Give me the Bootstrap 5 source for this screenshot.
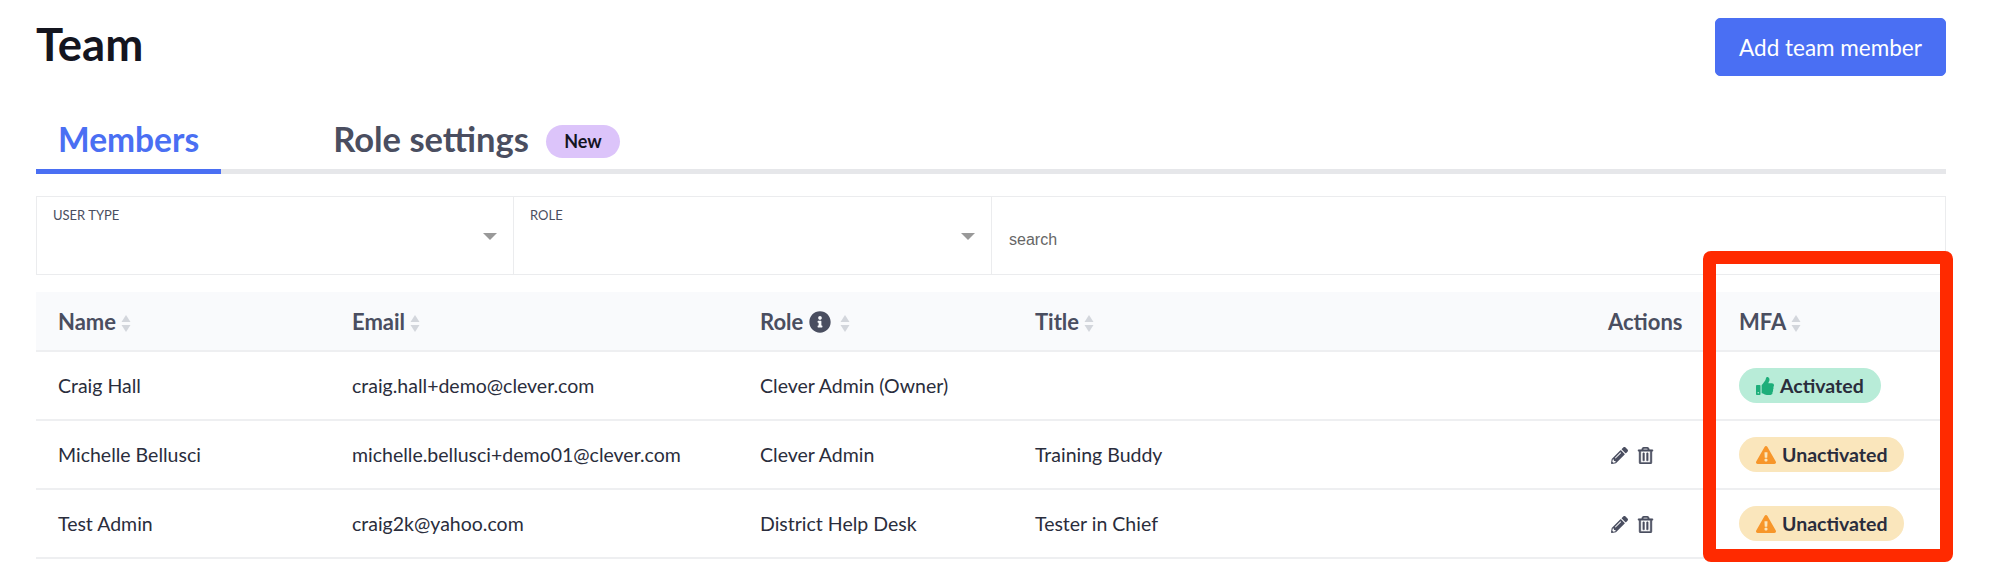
<!DOCTYPE html>
<html lang="en">

<head>
    <meta charset="UTF-8" />
    <meta name="viewport" content="width=device-width, initial-scale=1" />
    <title>Team</title>
    <link href="https://cdn.jsdelivr.net/npm/bootstrap@5.3.2/dist/css/bootstrap.min.css" rel="stylesheet" />
    <style>
        body { font-family: Lato, "Noto Sans", sans-serif; color: #2a2d3c; background: #fff; overflow: hidden; }
        .page-wrap { padding: 18px 53px 0 36px; height: 564px; }
        .page-title { font-size: 45.5px; font-weight: 700; line-height: 52px; margin: 0; color: #14151f; }
        .btn-add { background: #4a6ff3; border-color: #4a6ff3; color: #fff; font-size: 22.5px; width: 231px; height: 58px; border-radius: 5px; padding: 2px 0 0; }
        .team-tabs { border-bottom: 5px solid #e6e7ea; margin-top: 35px; height: 63px; }
        .team-tabs .nav-link { padding: 5px 22px 0; height: 63px; font-size: 33.5px; line-height: 46px; font-weight: 700; color: #4a4e60; border-bottom: 5px solid transparent; display: flex; align-items: flex-start; }
        .team-tabs .nav-link.active { color: #4a6ff3; border-bottom-color: #4a6ff3; }
        .team-tabs .tab-second { margin-left: 112px; padding-left: 0; font-size: 34.5px; }
        .new-pill { background: #dcc4fa; color: #14151f; font-size: 18px; line-height: 33px; font-weight: 700; border-radius: 17px; width: 74px; height: 33px; text-align: center; margin-left: 17px; margin-top: 9px; }
        .filter-row { display: flex; margin-top: 22px; height: 79px; border: 1px solid #ebecee; }
        .filter-cell { position: relative; border-right: 1px solid #ebecee; padding: 10px 16px; }
        .filter-user { width: 477px; }
        .filter-role { width: 478px; }
        .filter-label { font-size: 13px; line-height: 16px; color: #4a4e60; }
        .filter-caret { position: absolute; right: 16px; top: 36px; width: 0; height: 0; border-left: 7px solid transparent; border-right: 7px solid transparent; border-top: 7px solid #999; }
        .filter-search { flex: 1; border: 0; outline: 0; padding: 9px 17px 0; font-family: "Liberation Sans", Arial, sans-serif; font-size: 16px; color: #555; }
        .filter-search::placeholder { color: #666; opacity: 1; }
        .team-table { table-layout: fixed; width: 1910px; margin: 17px 0 0; }
        .team-table th, .team-table td { padding: 0 23px; vertical-align: middle; border-bottom: 2px solid #eeeff1; }
        .team-table th:first-child, .team-table td:first-child { padding-left: 22px; }
        .team-table thead th { background: #f9fafc; height: 59px; font-size: 22px; font-weight: 700; color: #4a4e60; white-space: nowrap; }
        .team-table tbody td { height: 69px; font-size: 19.5px; color: #2a2d3c; white-space: nowrap; }
        .sort-mark { display: inline-block; width: 10px; height: 17px; vertical-align: -2px; margin-left: 5px; }
        .info-mark { width: 22px; height: 22px; fill: #4a4e60; vertical-align: -3px; margin-right: 4px; }
        .act-icon { width: 17px; height: 17px; fill: #4a4e60; margin-right: 9px; vertical-align: -2px; }
        .act-icon:first-child { margin-left: 3px; }
        .mfa-pill { display: inline-flex; align-items: center; height: 35px; border-radius: 18px; padding: 0 17px; font-size: 19.5px; font-weight: 700; color: #2a2d3c; }
        .mfa-on { background: #b8ecd8; }
        .mfa-off { background: #fae6bc; }
        .mfa-pill svg { height: 18px; width: 18px; margin-right: 6px; }
        .mfa-on svg { fill: #1dae7a; }
        .mfa-off svg { fill: #f7962a; width: 20px; }
        .red-callout { position: absolute; left: 1703px; top: 251px; width: 250px; height: 311px; border: 13px solid #ff2a00; border-radius: 8px; pointer-events: none; }
    </style>
</head>

<body>
    <svg width="0" height="0" class="d-none">
        <symbol id="i-thumb" viewBox="0 0 512 512"><path d="M104 224H24c-13.255 0-24 10.745-24 24v240c0 13.255 10.745 24 24 24h80c13.255 0 24-10.745 24-24V248c0-13.255-10.745-24-24-24zM64 472c-13.255 0-24-10.745-24-24s10.745-24 24-24 24 10.745 24 24-10.745 24-24 24zM384 81.452c0 42.416-25.97 66.208-33.277 94.548h101.723c33.397 0 59.397 27.746 59.553 58.098.084 17.938-7.546 37.249-19.439 49.197l-.11.11c9.836 23.337 8.237 56.037-9.308 79.469 8.681 25.895-.069 57.704-16.382 74.757 4.298 17.598 2.244 32.575-6.148 44.632C440.202 511.587 389.616 512 346.839 512l-2.845-.001c-48.287-.017-87.806-17.598-119.56-31.725-15.957-7.099-36.821-15.887-52.651-16.178-6.54-.12-11.783-5.457-11.783-11.998v-213.77c0-3.2 1.282-6.271 3.558-8.521 39.614-39.144 56.648-80.587 89.117-113.111 14.804-14.832 20.188-37.236 25.393-58.902C282.515 39.293 291.817 0 312 0c24 0 72 8 72 81.452z"/></symbol>
        <symbol id="i-warn" viewBox="0 0 576 512"><path d="M569.517 440.013C587.975 472.007 564.806 512 527.94 512H48.054c-36.937 0-59.999-40.055-41.577-71.987L246.423 23.985c18.467-32.009 64.72-31.951 83.154 0l239.94 416.028zM288 354c-25.405 0-46 20.595-46 46s20.595 46 46 46 46-20.595 46-46-20.595-46-46-46zm-43.673-165.346l7.418 136c.347 6.364 5.609 11.346 11.982 11.346h48.546c6.373 0 11.635-4.982 11.982-11.346l7.418-136c.375-6.874-5.098-12.654-11.982-12.654h-63.383c-6.884 0-12.356 5.78-11.981 12.654z"/></symbol>
        <symbol id="i-pencil" viewBox="0 0 512 512"><path d="M497.9 142.1l-46.1 46.1c-4.7 4.7-12.3 4.7-17 0l-111-111c-4.7-4.7-4.7-12.3 0-17l46.1-46.1c18.7-18.7 49.1-18.7 67.9 0l60.1 60.1c18.8 18.7 18.8 49.1 0 67.9zM284.2 99.8L21.6 362.4.4 483.9c-2.9 16.4 11.4 30.6 27.8 27.8l121.5-21.3 262.6-262.6c4.7-4.7 4.7-12.3 0-17l-111-111c-4.8-4.7-12.4-4.7-17.1 0zM124.1 339.9c-5.5-5.5-5.5-14.3 0-19.8l154-154c5.5-5.5 14.3-5.5 19.8 0s5.5 14.3 0 19.8l-154 154c-5.5 5.5-14.3 5.5-19.8 0zM88 424h48v36.3l-64.5 11.3-31.1-31.1L51.7 376H88v48z"/></symbol>
        <symbol id="i-trash" viewBox="0 0 448 512"><path stroke="#4a4e60" stroke-width="14" d="M268 416h24a12 12 0 0 0 12-12V188a12 12 0 0 0-12-12h-24a12 12 0 0 0-12 12v216a12 12 0 0 0 12 12zM432 80h-82.41l-34-56.7A48 48 0 0 0 274.41 0H173.59a48 48 0 0 0-41.16 23.3L98.41 80H16A16 16 0 0 0 0 96v16a16 16 0 0 0 16 16h16v336a48 48 0 0 0 48 48h288a48 48 0 0 0 48-48V128h16a16 16 0 0 0 16-16V96a16 16 0 0 0-16-16zM171.84 50.91A6 6 0 0 1 177 48h94a6 6 0 0 1 5.15 2.91L293.61 80H154.39zM368 464H80V128h288zm-212-48h24a12 12 0 0 0 12-12V188a12 12 0 0 0-12-12h-24a12 12 0 0 0-12 12v216a12 12 0 0 0 12 12z"/></symbol>
        <symbol id="i-info" viewBox="0 0 512 512"><path d="M256 8C119.043 8 8 119.083 8 256c0 136.997 111.043 248 248 248s248-111.003 248-248C504 119.083 392.957 8 256 8zm0 110c23.196 0 42 18.804 42 42s-18.804 42-42 42-42-18.804-42-42 18.804-42 42-42zm56 254c0 6.627-5.373 12-12 12h-88c-6.627 0-12-5.373-12-12v-24c0-6.627 5.373-12 12-12h12v-64h-12c-6.627 0-12-5.373-12-12v-24c0-6.627 5.373-12 12-12h64c6.627 0 12 5.373 12 12v100h12c6.627 0 12 5.373 12 12v24z"/></symbol>
        <symbol id="i-sort" viewBox="0 0 10 17"><path d="M5 0l4.5 7H.5z" fill="#d3d6dc"/><path d="M5 17L.5 10h9z" fill="#d3d6dc"/></symbol>
    </svg>

    <div class="page-wrap position-relative">
        <div class="d-flex justify-content-between align-items-start">
            <h1 class="page-title">Team</h1>
            <button type="button" class="btn btn-primary btn-add">Add team member</button>
        </div>

        <ul class="nav team-tabs">
            <li class="nav-item"><a class="nav-link active" href="#">Members</a></li>
            <li class="nav-item"><a class="nav-link tab-second" href="#">Role settings<span class="new-pill">New</span></a></li>
        </ul>

        <div class="filter-row">
            <div class="filter-cell filter-user"><div class="filter-label">USER TYPE</div><span class="filter-caret"></span></div>
            <div class="filter-cell filter-role"><div class="filter-label">ROLE</div><span class="filter-caret"></span></div>
            <input class="filter-search" type="text" placeholder="search" />
        </div>

        <table class="team-table">
            <colgroup>
                <col width="293" /><col width="408" /><col width="275" /><col width="573" /><col width="131" /><col width="230" />
            </colgroup>
            <thead>
                <tr>
                    <th>Name<svg class="sort-mark"><use href="#i-sort" /></svg></th>
                    <th>Email<svg class="sort-mark"><use href="#i-sort" /></svg></th>
                    <th>Role <svg class="info-mark"><use href="#i-info" /></svg><svg class="sort-mark"><use href="#i-sort" /></svg></th>
                    <th>Title<svg class="sort-mark"><use href="#i-sort" /></svg></th>
                    <th>Actions</th>
                    <th>MFA<svg class="sort-mark"><use href="#i-sort" /></svg></th>
                </tr>
            </thead>
            <tbody>
                <tr>
                    <td>Craig Hall</td>
                    <td>craig.hall+demo@clever.com</td>
                    <td>Clever Admin (Owner)</td>
                    <td></td>
                    <td></td>
                    <td><span class="mfa-pill mfa-on"><svg><use href="#i-thumb" /></svg>Activated</span></td>
                </tr>
                <tr>
                    <td>Michelle Bellusci</td>
                    <td>michelle.bellusci+demo01@clever.com</td>
                    <td>Clever Admin</td>
                    <td>Training Buddy</td>
                    <td><svg class="act-icon"><use href="#i-pencil" /></svg><svg class="act-icon"><use href="#i-trash" /></svg></td>
                    <td><span class="mfa-pill mfa-off"><svg><use href="#i-warn" /></svg>Unactivated</span></td>
                </tr>
                <tr>
                    <td>Test Admin</td>
                    <td>craig2k@yahoo.com</td>
                    <td>District Help Desk</td>
                    <td>Tester in Chief</td>
                    <td><svg class="act-icon"><use href="#i-pencil" /></svg><svg class="act-icon"><use href="#i-trash" /></svg></td>
                    <td><span class="mfa-pill mfa-off"><svg><use href="#i-warn" /></svg>Unactivated</span></td>
                </tr>
            </tbody>
        </table>

        <div class="red-callout"></div>
    </div>

    <script src="https://cdn.jsdelivr.net/npm/bootstrap@5.3.2/dist/js/bootstrap.bundle.min.js"></script>
</body>

</html>
